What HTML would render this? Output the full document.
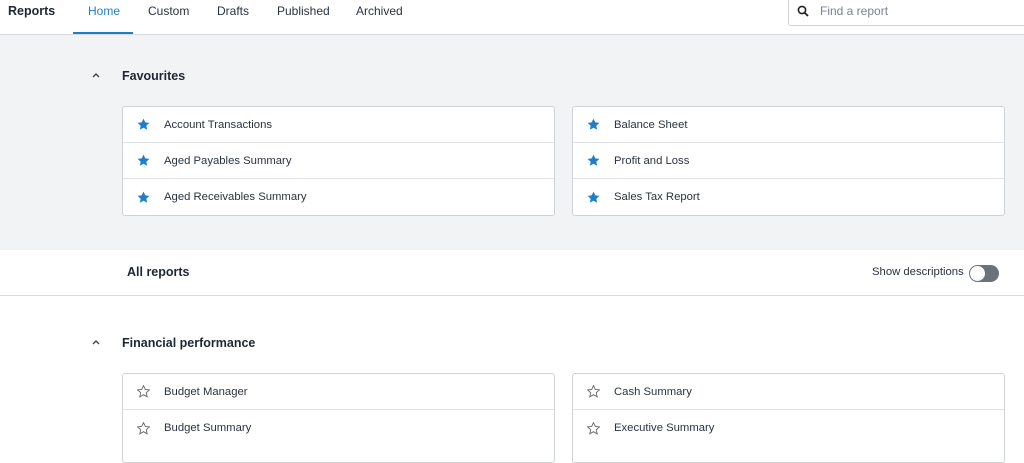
<!DOCTYPE html>
<html><head><style>
*{box-sizing:border-box;margin:0;padding:0}
body{width:1024px;height:449px;overflow:hidden;font-family:"Liberation Sans",sans-serif;background:#fff;color:#1f2733;position:relative;font-size:12px}
.a{position:absolute}
.nav{font-size:12px;color:#2a3340;top:4px}
.card{position:absolute;background:#fff;border:1px solid #cfd3d8;border-radius:3px;width:433px}
.row{height:36px;border-bottom:1px solid #dfe2e6;display:flex;align-items:center;padding-left:14px;font-size:11.3px;color:#2a3340}
.row:last-child{border-bottom:none}
.row svg{margin-right:14px}
h3{font-size:12.5px;font-weight:bold;position:absolute;color:#1f2733}
</style></head><body>
<div class="a" style="left:0;top:0;width:1024px;height:35px;border-bottom:1px solid #d8dbdf;background:#fff"></div>
<div class="a" style="left:8px;top:4px;font-weight:bold;font-size:12.5px">Reports</div>
<div class="a nav" style="left:88px;color:#1e7fc8">Home</div>
<div class="a" style="left:73px;top:32px;width:60px;height:2px;background:#1e7fc8"></div>
<div class="a nav" style="left:148px">Custom</div>
<div class="a nav" style="left:217px">Drafts</div>
<div class="a nav" style="left:277px">Published</div>
<div class="a nav" style="left:356px">Archived</div>
<div class="a" style="left:788px;top:-2px;width:240px;height:28px;border:1px solid #cfd3d8;border-radius:3px;background:#fff"></div>
<svg class="a" style="left:797px;top:5px" width="12" height="12" viewBox="0 0 12 12"><circle cx="5" cy="5" r="3.6" fill="none" stroke="#222" stroke-width="1.6"/><path d="M7.6 7.6L11 11" stroke="#222" stroke-width="1.8"/></svg>
<div class="a" style="left:820px;top:4px;color:#7a828c">Find a report</div>
<div class="a" style="left:0;top:35px;width:1024px;height:215px;background:#f2f3f5"></div>
<svg class="a" style="left:91px;top:72px" width="10" height="7" viewBox="0 0 10 7"><path d="M2 5L5 2l3 3" fill="none" stroke="#444" stroke-width="1.4"/></svg>
<h3 style="left:122px;top:69px">Favourites</h3>
<svg width="0" height="0" style="position:absolute"><defs><path id="st" d="M6.5 .6l1.8 3.8 4.1.5-3.1 2.8.9 4.1-3.7-2.1-3.7 2.1.9-4.1L.6 4.9l4.1-.5z"/></defs></svg>
<div class="card" style="left:122px;top:106px">
<div class="row"><svg width="13" height="13"><use href="#st" fill="#1e7fc8"/></svg>Account Transactions</div>
<div class="row"><svg width="13" height="13"><use href="#st" fill="#1e7fc8"/></svg>Aged Payables Summary</div>
<div class="row"><svg width="13" height="13"><use href="#st" fill="#1e7fc8"/></svg>Aged Receivables Summary</div>
</div>
<div class="card" style="left:572px;top:106px">
<div class="row"><svg width="13" height="13"><use href="#st" fill="#1e7fc8"/></svg>Balance Sheet</div>
<div class="row"><svg width="13" height="13"><use href="#st" fill="#1e7fc8"/></svg>Profit and Loss</div>
<div class="row"><svg width="13" height="13"><use href="#st" fill="#1e7fc8"/></svg>Sales Tax Report</div>
</div>
<h3 style="left:127px;top:265px">All reports</h3>
<div class="a" style="left:872px;top:266px;color:#2a3340;font-size:11.3px">Show descriptions</div>
<div class="a" style="left:969px;top:265px;width:30px;height:17px;border-radius:9px;background:#6b727c"></div>
<div class="a" style="left:970px;top:266px;width:15px;height:15px;border-radius:50%;background:#fff"></div>
<div class="a" style="left:0;top:295px;width:1024px;height:1px;background:#d8dbdf"></div>
<svg class="a" style="left:91px;top:339px" width="10" height="7" viewBox="0 0 10 7"><path d="M2 5L5 2l3 3" fill="none" stroke="#444" stroke-width="1.4"/></svg>
<h3 style="left:122px;top:336px">Financial performance</h3>
<div class="card" style="left:122px;top:373px;height:90px">
<div class="row"><svg width="13" height="13"><use href="#st" fill="none" stroke="#666" stroke-width=".9"/></svg>Budget Manager</div>
<div class="row"><svg width="13" height="13"><use href="#st" fill="none" stroke="#666" stroke-width=".9"/></svg>Budget Summary</div>
</div>
<div class="card" style="left:572px;top:373px;height:90px">
<div class="row"><svg width="13" height="13"><use href="#st" fill="none" stroke="#666" stroke-width=".9"/></svg>Cash Summary</div>
<div class="row"><svg width="13" height="13"><use href="#st" fill="none" stroke="#666" stroke-width=".9"/></svg>Executive Summary</div>
</div>
</body></html>
